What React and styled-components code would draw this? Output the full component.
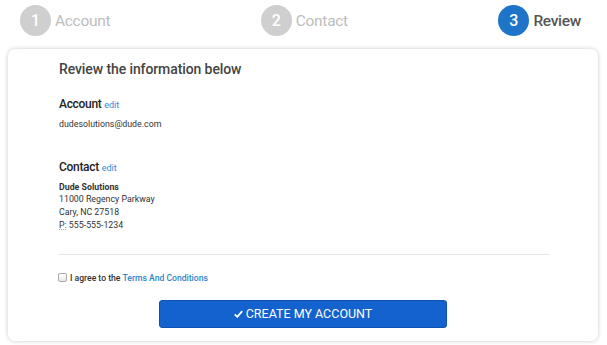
import React from 'react';
import styled, { createGlobalStyle } from 'styled-components';

const GlobalStyle = createGlobalStyle`
  html, body {
    margin: 0;
    padding: 0;
    background: #fff;
    font-family: Roboto, "Liberation Sans", Arial, sans-serif;
  }
`;

const Page = styled.div`
  width: 607px;
  height: 345px;
  box-sizing: border-box;
  padding: 0 9px 0 8px;
`;

const Steps = styled.div`
  display: flex;
  justify-content: space-between;
  align-items: center;
  height: 41px;
  padding: 0 17px 0 12px;
  margin-bottom: 8px;
`;

const Step = styled.div`
  display: flex;
  align-items: center;
  gap: 4px;
  font-size: 15.5px;
  font-weight: ${(p) => (p.active ? 500 : 400)};
  color: ${(p) => (p.active ? '#555' : '#bdbdbd')};
  letter-spacing: -0.3px;
`;

const StepNum = styled.span`
  width: 31px;
  height: 31px;
  border-radius: 50%;
  background: ${(p) => (p.active ? '#1e74c8' : '#cfcfcf')};
  color: #fff;
  font-size: 16px;
  font-weight: 500;
  letter-spacing: 0;
  display: flex;
  align-items: center;
  justify-content: center;
`;

const Card = styled.div`
  height: 292px;
  box-sizing: border-box;
  border-radius: 7px;
  background: #fff;
  box-shadow: 0 0 4px rgba(0, 0, 0, 0.22);
  padding: 11px 49px 0 51px;
  color: #333;
`;

const Heading = styled.h2`
  margin: 0 0 18px;
  font-size: 14px;
  font-weight: 500;
  color: #444;
  line-height: 18px;
  letter-spacing: -0.1px;
`;

const Section = styled.div`
  margin-bottom: ${(p) => p.gap}px;
`;

const SectionTitle = styled.div`
  font-size: 12px;
  font-weight: 500;
  color: #222;
  line-height: 16px;
  margin-bottom: 5px;
  letter-spacing: -0.3px;
`;

const Edit = styled.a`
  font-size: 9px;
  font-weight: 400;
  color: #2d8ad8;
  letter-spacing: 0;
  text-decoration: none;
`;

const Line = styled.div`
  font-size: 8.8px;
  line-height: 12.7px;
  color: #333;
  font-weight: ${(p) => (p.bold ? 700 : 400)};
`;

const Abbr = styled.abbr`
  text-decoration: underline dotted #aaa;
  cursor: help;
`;

const Rule = styled.hr`
  border: 0;
  border-top: 1px solid #e3e3e3;
  margin: 0 0 18px;
`;

const Agree = styled.label`
  display: flex;
  align-items: center;
  font-size: 8.6px;
  font-weight: 500;
  color: #333;
  margin-left: -1px;
  white-space: pre;
`;

const Box = styled.span`
  width: 7px;
  height: 7px;
  margin-right: 3px;
  border: 1px solid #aaa;
  border-radius: 2px;
  background: linear-gradient(#fff, #e8e8e8);
`;

const TermsLink = styled.a`
  color: #2d86c9;
  text-decoration: none;
`;

const ButtonRow = styled.div`
  display: flex;
  padding-left: 100px;
  margin-top: 17px;
`;

const CreateButton = styled.button`
  width: 288px;
  height: 28px;
  border: 1px solid #0f52b0;
  border-radius: 3px;
  background: #1462cd;
  color: #fff;
  font-family: Roboto, "Liberation Sans", Arial, sans-serif;
  font-size: 12.5px;
  font-weight: 400;
  display: flex;
  align-items: center;
  justify-content: center;
  gap: 3px;
  cursor: pointer;
`;

const Check = () => (
  <svg width="9" height="8" viewBox="0 0 9 8">
    <path d="M0.8 4.3 L3.3 6.8 L8.2 1.2" stroke="#fff" strokeWidth="1.8" fill="none" />
  </svg>
);

export default function App() {
  return (
    <Page>
      <GlobalStyle />
      <Steps>
        <Step>
          <StepNum>1</StepNum>Account
        </Step>
        <Step>
          <StepNum>2</StepNum>Contact
        </Step>
        <Step active>
          <StepNum active>3</StepNum>Review
        </Step>
      </Steps>
      <Card>
        <Heading>Review the information below</Heading>
        <Section gap={28}>
          <SectionTitle>
            Account <Edit href="#">edit</Edit>
          </SectionTitle>
          <Line>dudesolutions@dude.com</Line>
        </Section>
        <Section gap={22}>
          <SectionTitle>
            Contact <Edit href="#">edit</Edit>
          </SectionTitle>
          <Line bold>Dude Solutions</Line>
          <Line>11000 Regency Parkway</Line>
          <Line>Cary, NC 27518</Line>
          <Line>
            <Abbr title="Phone">P:</Abbr> 555-555-1234
          </Line>
        </Section>
        <Rule />
        <Agree>
          <Box />
          I agree to the <TermsLink href="#">Terms And Conditions</TermsLink>
        </Agree>
        <ButtonRow>
          <CreateButton>
            <Check />
            CREATE MY ACCOUNT
          </CreateButton>
        </ButtonRow>
      </Card>
    </Page>
  );
}
